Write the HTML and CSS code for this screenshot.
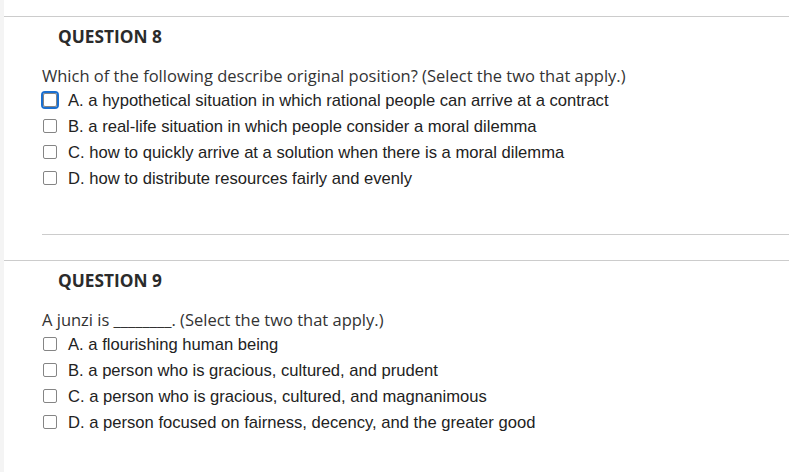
FILE: index.html
```html
<!DOCTYPE html>
<html lang="en">
<head>
<meta charset="utf-8">
<title>Quiz</title>
<link rel="stylesheet" href="styles.css">
</head>
<body>
<div class="page">
  <div class="rail"></div>
  <main class="main">
    <section class="question">
      <h2 class="q-title">QUESTION 8</h2>
      <div class="q-body">
        <p class="q-text">Which of the following describe original position? (Select the two that apply.)</p>
        <ul class="options">
          <li class="option"><span class="box focused"></span><span class="label">A. a hypothetical situation in which rational people can arrive at a contract</span></li>
          <li class="option"><span class="box"></span><span class="label">B. a real-life situation in which people consider a moral dilemma</span></li>
          <li class="option"><span class="box"></span><span class="label">C. how to quickly arrive at a solution when there is a moral dilemma</span></li>
          <li class="option"><span class="box"></span><span class="label">D. how to distribute resources fairly and evenly</span></li>
        </ul>
        <div class="q-sep"></div>
      </div>
    </section>
    <section class="question">
      <h2 class="q-title">QUESTION 9</h2>
      <div class="q-body">
        <p class="q-text">A junzi is ________. (Select the two that apply.)</p>
        <ul class="options">
          <li class="option"><span class="box"></span><span class="label">A. a flourishing human being</span></li>
          <li class="option"><span class="box"></span><span class="label">B. a person who is gracious, cultured, and prudent</span></li>
          <li class="option"><span class="box"></span><span class="label">C. a person who is gracious, cultured, and magnanimous</span></li>
          <li class="option"><span class="box"></span><span class="label">D. a person focused on fairness, decency, and the greater good</span></li>
        </ul>
      </div>
    </section>
  </main>
</div>
</body>
</html>
```

FILE: styles.css
```css
html, body {
  margin: 0;
  padding: 0;
  background: #ffffff;
}

.page {
  display: flex;
  min-height: 472px;
}

.rail {
  width: 4px;
  flex: none;
  background: #f4f4f4;
}

.main {
  flex: 1;
  padding-top: 16px;
}

.question {
  border-top: 1px solid #cccccc;
  padding-top: 9px;
  margin-bottom: 25px;
}

.q-title {
  margin: 0 0 17px 54px;
  font-family: "Open Sans", "Liberation Sans", sans-serif;
  font-weight: 700;
  font-size: 17.3px;
  line-height: 22px;
  color: #2b2b2b;
}

.q-body {
  padding-left: 38px;
}

.q-text {
  margin: 0;
  font-family: "Open Sans", "Liberation Sans", sans-serif;
  font-size: 16.5px;
  line-height: 22px;
  color: #333333;
}

.options {
  list-style: none;
  margin: 1px 0 0 0;
  padding: 0;
}

.option {
  display: flex;
  align-items: flex-start;
  height: 26px;
  font-family: "Liberation Sans", Arial, sans-serif;
  font-size: 16.6px;
  line-height: 25px;
  color: #222222;
}

.box {
  flex: none;
  width: 12px;
  height: 12px;
  margin: 5px 0 0 1px;
  border: 1px solid #858585;
  border-radius: 2px;
  background: #ffffff;
}

.box.focused {
  outline: 2px solid #1a6fd0;
  outline-offset: 0;
}

.label {
  margin-left: 11px;
}

.q-sep {
  margin-top: 42px;
  border-top: 1px solid #cccccc;
}
```
